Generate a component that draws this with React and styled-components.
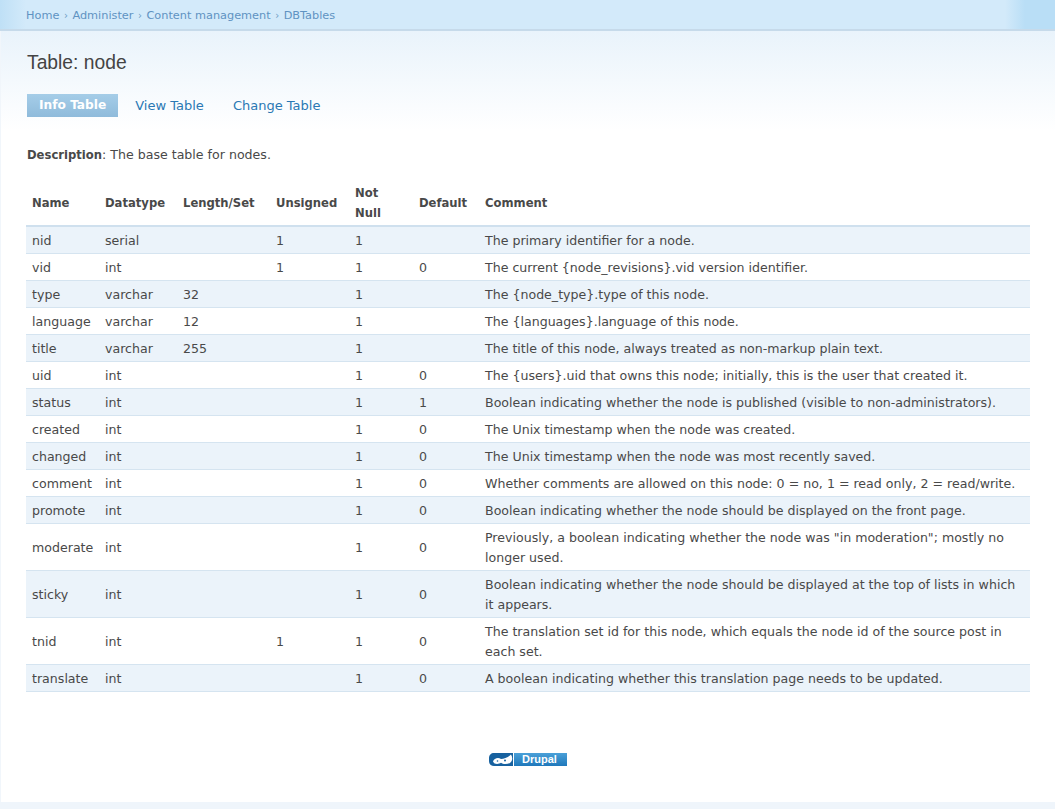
import React from 'react';
import styled, { createGlobalStyle } from 'styled-components';

const GlobalStyle = createGlobalStyle`
  html, body {
    margin: 0;
    padding: 0;
    background: #eff5fb;
  }
`;

const Page = styled.div`
  width: 1055px;
  height: 809px;
  display: flex;
  flex-direction: column;
  overflow: hidden;
  background: #eff5fb;
  font-family: "DejaVu Sans", Verdana, sans-serif;
  font-size: 12.6px;
  color: #494949;
`;

const Breadcrumb = styled.div`
  height: 27px;
  flex: none;
  display: flex;
  align-items: center;
  padding: 2px 0 0 26px;
  font-size: 11.3px;
  color: #6f9dc4;
  background:
    linear-gradient(90deg, #bfe0f6 0, rgba(191, 224, 246, 0) 26px),
    linear-gradient(270deg, #b9def6 0, #b9def6 30px, rgba(185, 222, 246, 0) 50px),
    #d3eafa;
  border-bottom: 2px solid #c6daea;
`;

const CrumbLink = styled.a`
  color: #5f93c2;
  text-decoration: none;
`;

const CrumbSep = styled.span`
  margin: 0 4.5px;
  font-size: 10px;
`;

const Content = styled.div`
  flex: 1;
  padding: 0 25px 0 25px;
  background: linear-gradient(180deg, #e9f3fb 0, #ffffff 100px);
  border-left: 1px solid #f1f6fb;
  margin-bottom: 7px;
  display: flex;
  flex-direction: column;
`;

const Title = styled.h1`
  margin: 21px 0 0 1px;
  font: normal 19.3px/22px "Liberation Sans", Arial, sans-serif;
  color: #444;
`;

const Tabs = styled.nav`
  display: flex;
  align-items: center;
  margin: 20px 0 0 1px;
  height: 23px;
`;

const Tab = styled.a`
  font-size: ${props => (props.$active ? '12.2px' : '13px')};
  text-decoration: none;
  color: ${props => (props.$active ? '#fff' : '#2a78b4')};
  font-weight: ${props => (props.$active ? 'bold' : 'normal')};
  background: ${props => (props.$active ? 'linear-gradient(180deg, #a5cde8, #8fbbdb)' : 'none')};
  padding: ${props => (props.$active ? '0 12px' : '0')};
  line-height: 23px;
  margin-right: ${props => (props.$active ? '17px' : '29px')};
`;

const Description = styled.p`
  margin: 30px 0 0 1px;
  line-height: 16px;

  strong {
    font-size: 11.6px;
  }
`;

const Table = styled.table`
  width: 1004px;
  margin-top: 19px;
  border-collapse: collapse;
  table-layout: fixed;
`;

const HeadCell = styled.th`
  text-align: left;
  font-weight: bold;
  font-size: 11.6px;
  padding: 0 6px 1.5px;
  line-height: 20px;
  height: 41.5px;
  vertical-align: middle;
  border-bottom: 2px solid #cfe0ee;
`;

const Row = styled.tr`
  background: ${props => (props.$odd ? '#ebf3fa' : '#fff')};
  border-bottom: 1px solid #d5e4f0;
`;

const Cell = styled.td`
  padding: 4px 12px 2px 6px;
  line-height: 20px;
  vertical-align: middle;
`;

const Footer = styled.div`
  margin-top: auto;
  display: flex;
  justify-content: center;
  padding-bottom: 36px;
`;

const Badge = styled.a`
  display: flex;
  width: 78px;
  height: 13px;
  text-decoration: none;
`;

const BadgeLabel = styled.span`
  flex: 1;
  background: linear-gradient(180deg, #4aa0d8, #1f78bb);
  color: #fff;
  font: bold 11px/13px "Liberation Sans", Arial, sans-serif;
  padding-left: 8px;
  margin-left: 1px;
`;

const columns = [73, 78, 93, 79, 64, 66, 551];
const headers = ['Name', 'Datatype', 'Length/Set', 'Unsigned', 'Not Null', 'Default', 'Comment'];

const rows = [
  ['nid', 'serial', '', '1', '1', '', 'The primary identifier for a node.'],
  ['vid', 'int', '', '1', '1', '0', 'The current {node_revisions}.vid version identifier.'],
  ['type', 'varchar', '32', '', '1', '', 'The {node_type}.type of this node.'],
  ['language', 'varchar', '12', '', '1', '', 'The {languages}.language of this node.'],
  ['title', 'varchar', '255', '', '1', '', 'The title of this node, always treated as non-markup plain text.'],
  ['uid', 'int', '', '', '1', '0', 'The {users}.uid that owns this node; initially, this is the user that created it.'],
  ['status', 'int', '', '', '1', '1', 'Boolean indicating whether the node is published (visible to non-administrators).'],
  ['created', 'int', '', '', '1', '0', 'The Unix timestamp when the node was created.'],
  ['changed', 'int', '', '', '1', '0', 'The Unix timestamp when the node was most recently saved.'],
  ['comment', 'int', '', '', '1', '0', 'Whether comments are allowed on this node: 0 = no, 1 = read only, 2 = read/write.'],
  ['promote', 'int', '', '', '1', '0', 'Boolean indicating whether the node should be displayed on the front page.'],
  ['moderate', 'int', '', '', '1', '0', 'Previously, a boolean indicating whether the node was "in moderation"; mostly no longer used.'],
  ['sticky', 'int', '', '', '1', '0', 'Boolean indicating whether the node should be displayed at the top of lists in which it appears.'],
  ['tnid', 'int', '', '1', '1', '0', 'The translation set id for this node, which equals the node id of the source post in each set.'],
  ['translate', 'int', '', '', '1', '0', 'A boolean indicating whether this translation page needs to be updated.'],
];

function DropLogo() {
  return (
    <svg width="24" height="13" viewBox="0 0 24 13">
      <path d="M5 0H25V13H5C2 13 0 11 0 8V5C0 2 2 0 5 0Z" fill="#17619f" />
      <path d="M4 8.5C5 5.5 9 4 12 6C15 5.5 19 4.5 22 1.5C24 5 23.5 8 21 10C18 11.5 14 11.5 12 9.8C9.5 11.5 5 11.5 4 8.5Z" fill="#fff" />
      <circle cx="16" cy="7.4" r="1" fill="#17619f" />
      <circle cx="8.5" cy="8" r="0.8" fill="#17619f" />
    </svg>
  );
}

export default function App() {
  return (
    <Page>
      <GlobalStyle />
      <Breadcrumb>
        <CrumbLink href="#">Home</CrumbLink>
        <CrumbSep>›</CrumbSep>
        <CrumbLink href="#">Administer</CrumbLink>
        <CrumbSep>›</CrumbSep>
        <CrumbLink href="#">Content management</CrumbLink>
        <CrumbSep>›</CrumbSep>
        <CrumbLink href="#">DBTables</CrumbLink>
      </Breadcrumb>
      <Content>
        <Title>Table: node</Title>
        <Tabs>
          <Tab href="#" $active>Info Table</Tab>
          <Tab href="#">View Table</Tab>
          <Tab href="#">Change Table</Tab>
        </Tabs>
        <Description><strong>Description</strong>: The base table for nodes.</Description>
        <Table>
          <colgroup>
            {columns.map((w, i) => <col key={i} width={w} />)}
          </colgroup>
          <thead>
            <tr>
              {headers.map(h => <HeadCell key={h}>{h}</HeadCell>)}
            </tr>
          </thead>
          <tbody>
            {rows.map((row, i) => (
              <Row key={row[0]} $odd={i % 2 === 0}>
                {row.map((value, j) => <Cell key={j}>{value}</Cell>)}
              </Row>
            ))}
          </tbody>
        </Table>
        <Footer>
          <Badge href="#">
            <DropLogo />
            <BadgeLabel>Drupal</BadgeLabel>
          </Badge>
        </Footer>
      </Content>
    </Page>
  );
}
